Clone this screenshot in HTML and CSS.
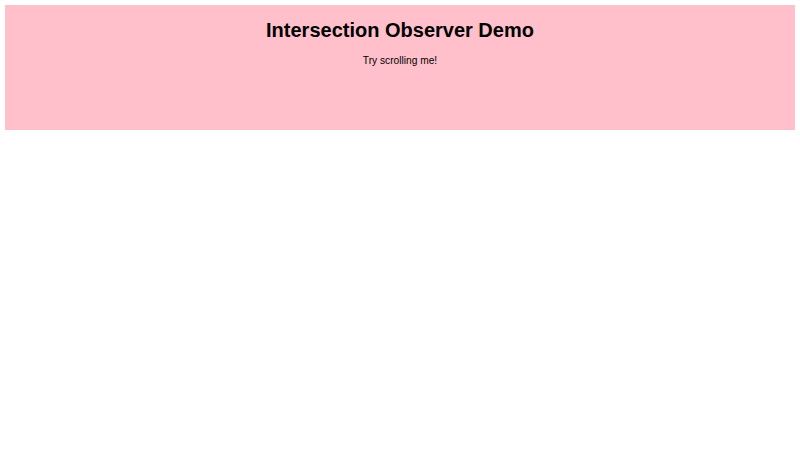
FILE: index.html
```html
<!DOCTYPE html>
<html>
<head>
<meta charset="utf-8">
<link rel="stylesheet" href="styles.css">
</head>
<body>
<div class="box">
  <h1 class="title">Intersection Observer Demo</h1>
  <p class="note">Try scrolling me!</p>
</div>
</body>
</html>
```
FILE: styles.css
```css
html, body { margin: 0; padding: 0; background: #fff; }
body { padding: 5px; font-family: "Liberation Sans", Arial, sans-serif; color: #000; }
.box { background: #ffc0cb; height: 125px; text-align: center; overflow: hidden; }
.title { font-size: 20px; font-weight: bold; margin: 0; padding-top: 14px; line-height: 23px; }
.note { font-size: 10.2px; margin: 13px 0 0; line-height: 12px; }
```
